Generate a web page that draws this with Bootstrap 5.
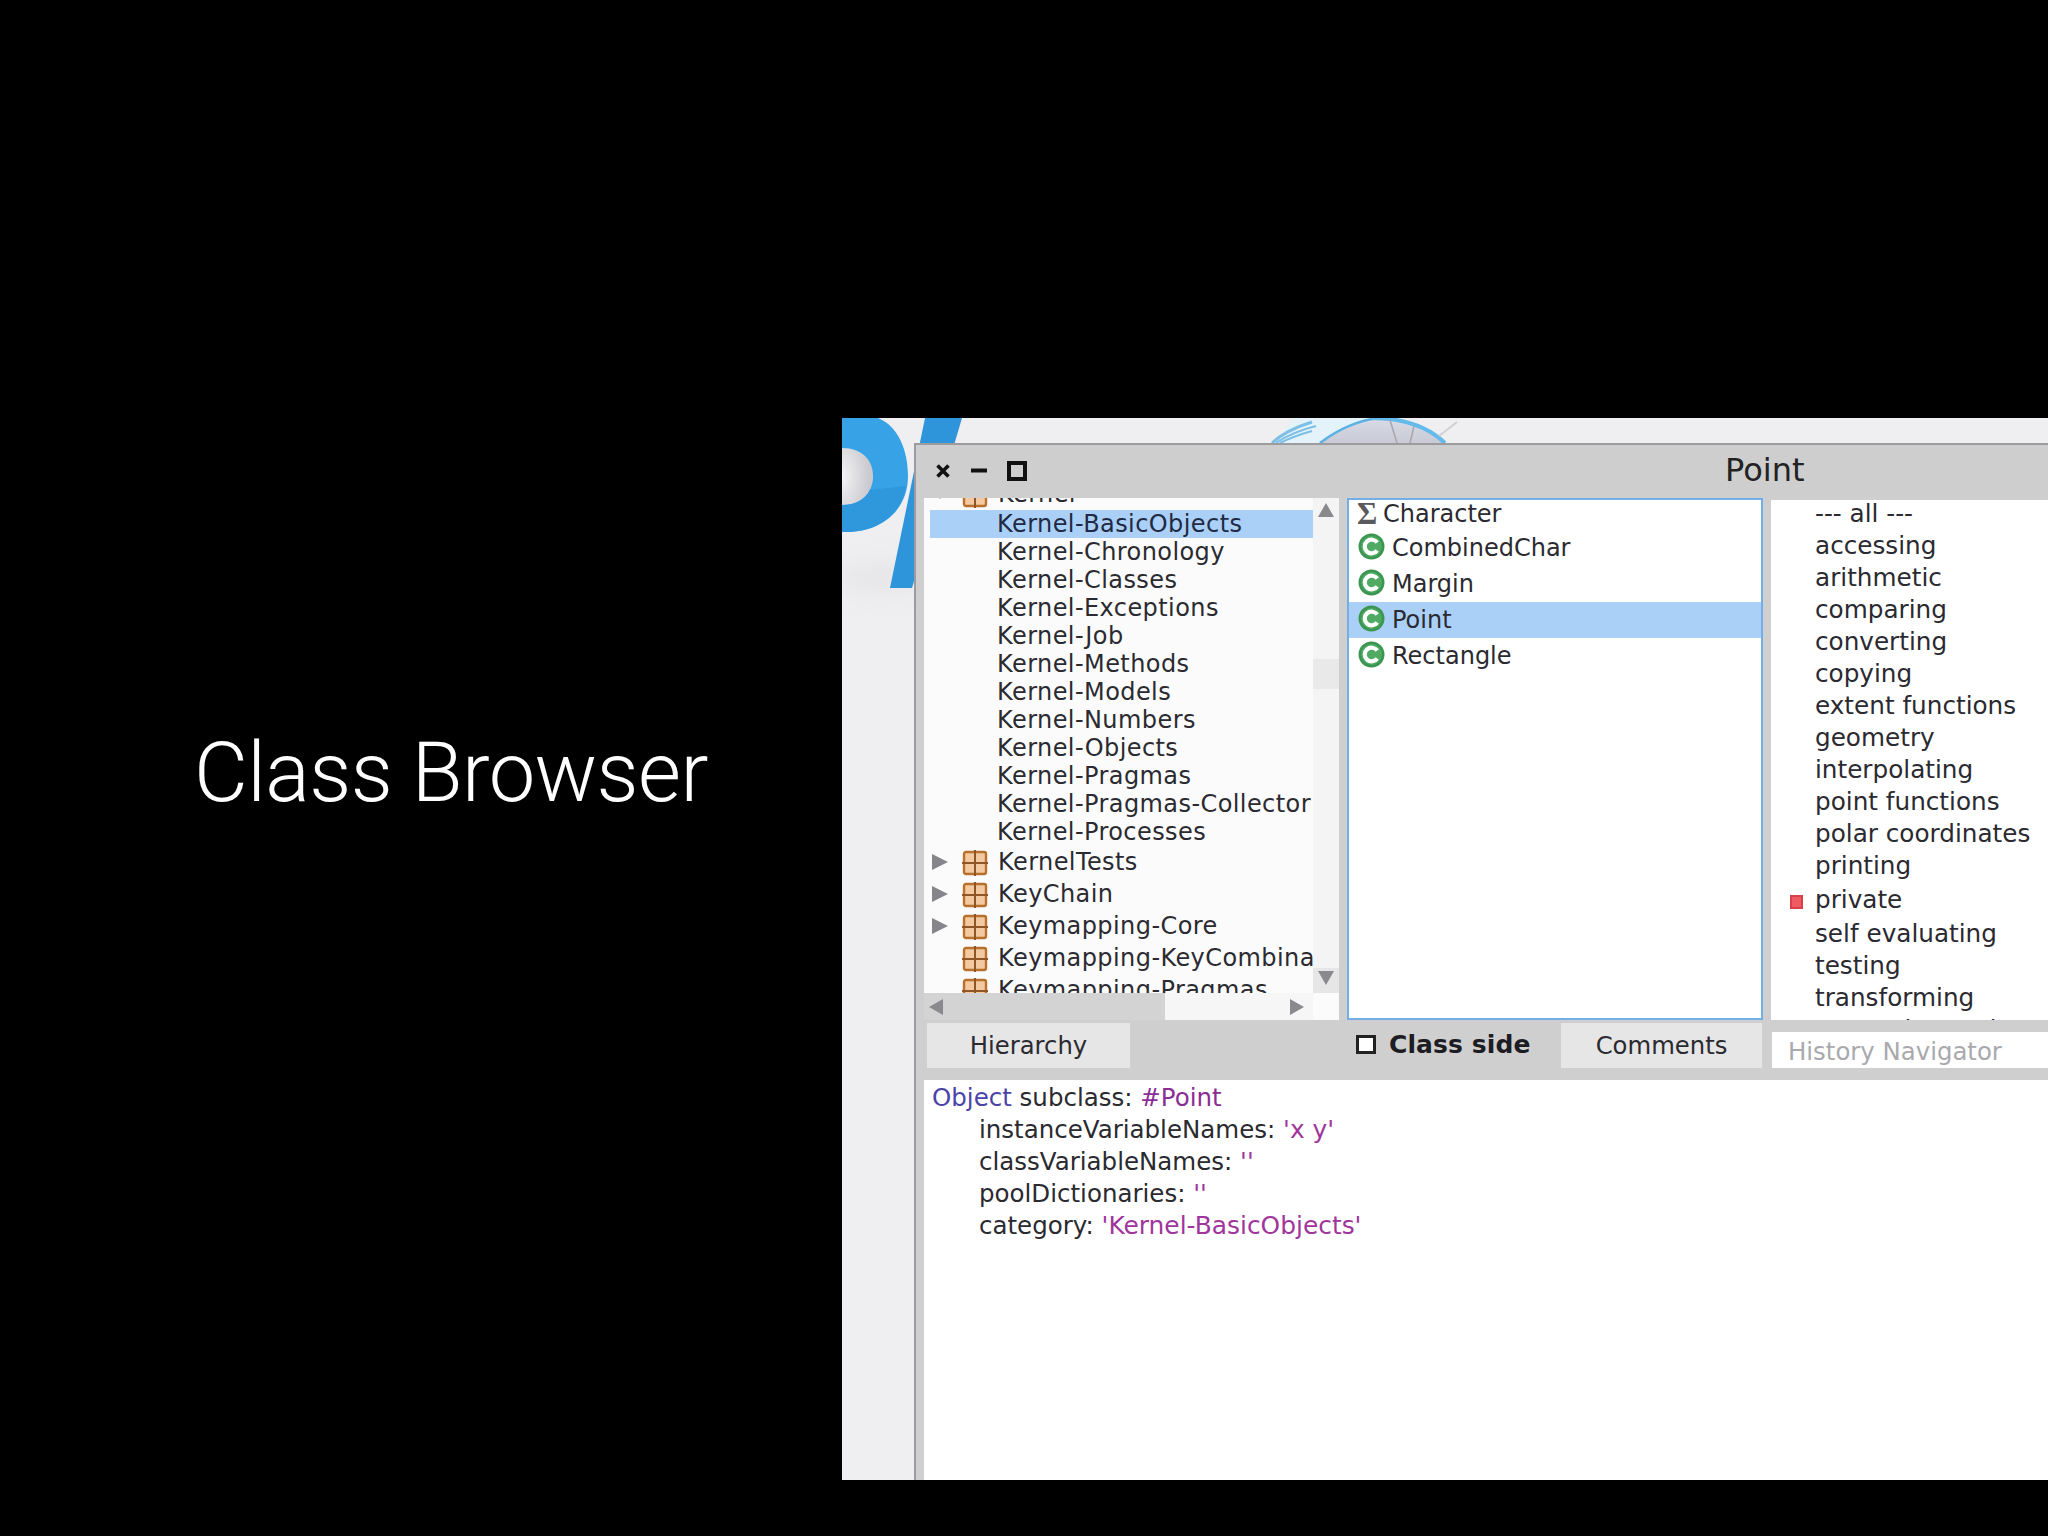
<!DOCTYPE html>
<html lang="en">
<head>
<meta charset="utf-8">
<title>Class Browser</title>
<link href="https://cdn.jsdelivr.net/npm/bootstrap@5.3.0/dist/css/bootstrap.min.css" rel="stylesheet">
<style>
html,body{margin:0;height:1536px;width:2048px;overflow:hidden;background:#000}
.stage{width:2048px;height:1536px;background:#000}
.slide-side{width:842px;height:1536px;flex:none;padding-left:194px;padding-top:718px}
.slide-heading{font:300 83px/110px Roboto,"Liberation Sans",sans-serif;color:#fff;margin:0;white-space:nowrap;letter-spacing:-.6px}
.shot{width:1206px;height:1062px;margin-top:418px;flex:none;position:relative;overflow:hidden;background:#efeef0}
.shot-art{position:absolute;left:0;top:0;width:1206px;height:300px}
.pwin{position:relative;margin:25px 0 0 72px;width:1134px;height:1037px;background:#cfcfd0;border-left:2px solid #9c9c9e;border-top:2px solid #9c9c9e;font-family:"DejaVu Sans",sans-serif;color:#2a2a30}
.titlebar{height:53px;flex:none;background:#cecece;padding-bottom:2px}
.win-ctl{padding-left:19px;gap:20px;width:809px;flex:none}
.win-title{font-size:32px;line-height:51px;color:#222}
.panes{height:522px;flex:none;padding-left:8px;gap:8px}
.tree-pane{width:415px;flex:none;background:#fafafa;display:grid;grid-template-columns:389px 26px;grid-template-rows:495px 27px}
.tree-view{overflow:hidden;padding-left:6px;background:#fbfbfb}
.tree-list{margin:-20px 0 0;padding:0;list-style:none}
.tree-row{height:28px;padding-left:67px;font-size:24px;line-height:28px;white-space:nowrap;overflow:hidden;letter-spacing:.42px}
.tree-row.pkg{height:32px;line-height:32px;padding-left:0}
.tree-row.on{background:#abd0f7;color:#1f2a44}
.tw{display:inline-block;width:18px;margin-left:1px;margin-right:13px;vertical-align:-1px}
.pk{margin-right:10px;vertical-align:-6px}
.vbar{background:#f4f4f5;flex-direction:column;padding-top:4px}
.vthumb{height:30px;background:#e9e9ea;margin-top:141px}
.vdown{margin-top:auto;background:#e6e6e7;height:25px;padding-bottom:5px}
.hbar{background:#f6f6f6}
.hthumb{width:241px;background:#d3d3d4}
.hend{flex:1;padding-right:8px}
.corner{background:#fbfbfb}
.class-pane{width:416px;flex:none;background:#fff;border:2px solid #74aee6;margin:0}
.class-list{margin:0;padding:0;list-style:none}
.class-row{height:36px;padding-left:9px;font-size:24px;line-height:36px;white-space:nowrap}
.class-row.first{height:30px;line-height:28px;padding-left:8px}
.class-row.on{background:#abd0f7}
.sig{display:inline-block;width:26px;font-size:31px;font-weight:700;color:#5a5a5e;font-family:"Liberation Serif",serif;line-height:28px;vertical-align:-2px}
.cic{vertical-align:-4px;margin-right:7px;margin-top:-8px}
.proto-pane{flex:1;background:#fff;margin-top:2px;overflow:hidden}
.proto-list{margin:0;padding:0;list-style:none}
.proto-row{height:32px;padding-left:44px;font-size:24.7px;line-height:28px;white-space:nowrap;position:relative}
.proto-row.tall{height:34px;line-height:32px}
.prv{position:absolute;left:19px;top:11px;width:13px;height:14px;background:#ef5a62;border:2px solid #d8404a}
.lower{height:60px;flex:none;padding-left:11px}
.pbtn{--bs-btn-border-radius:0;--bs-btn-bg:#e6e6e7;--bs-btn-border-color:#e6e6e7;--bs-btn-padding-y:0;--bs-btn-padding-x:0;--bs-btn-font-size:24.3px;--bs-btn-line-height:38px;--bs-btn-color:#2a2a30;height:45px;margin-top:3px;font-family:"DejaVu Sans",sans-serif}
.b-hier{width:203px}
.b-comm{width:201px}
.side-box{margin-left:226px;width:205px;flex:none;height:49px}
.cbx{width:20px;height:19px;border:3px solid #222;background:#fff;flex:none}
.side-lbl{font-size:25px;font-weight:700;color:#1c1c22;margin-left:13px;letter-spacing:.1px}
.hist{--bs-border-radius:0;border:0;border-radius:0;background:#fff;width:280px;margin-left:10px;height:36px;margin-top:12px;padding:2px 0 0 16px;font:24.4px "DejaVu Sans",sans-serif;flex:none}
.hist::placeholder{color:#a9a9ad;opacity:1}
.code-pane{flex:1;margin-left:8px;background:#fff;padding:2px 0 0 8px;font-size:24.5px;line-height:32px;min-height:0}
.code-line{white-space:nowrap;height:32px}
.ind{padding-left:47px}
.k-cls{color:#4a43a8}
.k-sym{color:#8a2e96}
.k-str{color:#a0359c;font-size:24.9px}
</style>
</head>
<body>
<div class="stage d-flex">
  <div class="slide-side"><h1 class="slide-heading">Class Browser</h1></div>
  <div class="shot">
    <svg class="shot-art" viewBox="0 0 1206 300" aria-hidden="true">
      <defs>
        <filter id="sft" x="-50%" y="-200%" width="200%" height="500%"><feGaussianBlur stdDeviation="14"/></filter>
        <linearGradient id="dome" x1="0" y1="0" x2="0" y2="1"><stop offset="0" stop-color="#d9dbe6"/><stop offset="1" stop-color="#c9cad6"/></linearGradient>
        <radialGradient id="hole" cx="0" cy=".5" r=".9"><stop offset="0" stop-color="#f4f4f6"/><stop offset="1" stop-color="#c9c9ce"/></radialGradient>
      </defs>
      <ellipse cx="40" cy="160" rx="50" ry="10" fill="#d8d8dc" opacity=".6" filter="url(#sft)"/>
      <path d="M83 0H120L70 170H48Z" fill="#2f95db"/>
      <path d="M0 30C20 30 31 42 31 58C31 74 20 87 0 87Z" fill="url(#hole)"/>
      <path fill-rule="evenodd" d="M0 0H36C56 8 66 32 66 58C66 92 40 114 4 114H0V87C20 87 31 74 31 58C31 42 20 30 0 30Z" fill="#37a2e6"/>
      <path d="M64 68C60 94 38 114 4 114H0V87C14 87 24 81 28 72Z" fill="#2f97dc"/>
      <path d="M432 25L452 0H530L478 25Z" fill="#e4f3f9"/>
      <path d="M430 25Q444 12 470 4" stroke="#7dbfe6" stroke-width="3" fill="none"/>
      <path d="M434 25Q450 14 474 8" stroke="#7dbfe6" stroke-width="2" fill="none"/>
      <path d="M438 25Q452 18 470 13" stroke="#7dbfe6" stroke-width="2" fill="none"/>
      <path d="M478 25C500 8 525 0 540 0C565 0 585 10 603 25Z" fill="url(#dome)"/>
      <path d="M478 25C500 8 525 0 540 0" stroke="#5ab1e4" stroke-width="2.5" fill="none"/>
      <path d="M530 0C560 0 585 8 603 25" stroke="#62bbea" stroke-width="4" fill="none"/>
      <path d="M548 2L555 25M572 8L568 25" stroke="#a8a8b0" stroke-width="1.6" fill="none"/>
      <path d="M597 18L615 4" stroke="#d0d0d4" stroke-width="2" fill="none"/>
    </svg>
    <div class="pwin d-flex flex-column">
      <div class="titlebar d-flex align-items-center">
        <div class="win-ctl d-flex align-items-center">
          <svg width="16" height="16" viewBox="0 0 16 16"><path d="M2.5 2.5L13.5 13.5M13.5 2.5L2.5 13.5" stroke="#111" stroke-width="3.6" fill="none"/></svg>
          <svg width="16" height="5" viewBox="0 0 16 5"><rect width="16" height="4" y=".5" fill="#111"/></svg>
          <svg width="20" height="20" viewBox="0 0 20 20"><rect x="2" y="2" width="16" height="16" stroke="#111" stroke-width="4" fill="none"/></svg>
        </div>
        <div class="win-title">Point</div>
      </div>
      <div class="panes d-flex">
        <div class="tree-pane">
          <div class="tree-view">
            <ul class="tree-list">
              <li class="tree-row pkg"><svg class="tw" viewBox="0 0 18 18" height="18"><path d="M1 4H17L9 14Z" fill="#85858a"/></svg><svg class="pk" width="26" height="26" viewBox="0 0 26 26"><rect x="2" y="2" width="22" height="22" rx="2" fill="#f2c9a0" stroke="#b9702c" stroke-width="2.4"/><path d="M13 0V26M0 13H26" stroke="#8f5526" stroke-width="2"/></svg>Kernel</li>
              <li class="tree-row on">Kernel-BasicObjects</li>
              <li class="tree-row">Kernel-Chronology</li>
              <li class="tree-row">Kernel-Classes</li>
              <li class="tree-row">Kernel-Exceptions</li>
              <li class="tree-row">Kernel-Job</li>
              <li class="tree-row">Kernel-Methods</li>
              <li class="tree-row">Kernel-Models</li>
              <li class="tree-row">Kernel-Numbers</li>
              <li class="tree-row">Kernel-Objects</li>
              <li class="tree-row">Kernel-Pragmas</li>
              <li class="tree-row">Kernel-Pragmas-Collector</li>
              <li class="tree-row">Kernel-Processes</li>
              <li class="tree-row pkg"><svg class="tw" viewBox="0 0 18 18" height="18"><path d="M1 1L17 9L1 17Z" fill="#85858a"/></svg><svg class="pk" width="26" height="26" viewBox="0 0 26 26"><rect x="2" y="2" width="22" height="22" rx="2" fill="#f2c9a0" stroke="#b9702c" stroke-width="2.4"/><path d="M13 0V26M0 13H26" stroke="#8f5526" stroke-width="2"/></svg>KernelTests</li>
              <li class="tree-row pkg"><svg class="tw" viewBox="0 0 18 18" height="18"><path d="M1 1L17 9L1 17Z" fill="#85858a"/></svg><svg class="pk" width="26" height="26" viewBox="0 0 26 26"><rect x="2" y="2" width="22" height="22" rx="2" fill="#f2c9a0" stroke="#b9702c" stroke-width="2.4"/><path d="M13 0V26M0 13H26" stroke="#8f5526" stroke-width="2"/></svg>KeyChain</li>
              <li class="tree-row pkg"><svg class="tw" viewBox="0 0 18 18" height="18"><path d="M1 1L17 9L1 17Z" fill="#85858a"/></svg><svg class="pk" width="26" height="26" viewBox="0 0 26 26"><rect x="2" y="2" width="22" height="22" rx="2" fill="#f2c9a0" stroke="#b9702c" stroke-width="2.4"/><path d="M13 0V26M0 13H26" stroke="#8f5526" stroke-width="2"/></svg>Keymapping-Core</li>
              <li class="tree-row pkg"><span class="tw"></span><svg class="pk" width="26" height="26" viewBox="0 0 26 26"><rect x="2" y="2" width="22" height="22" rx="2" fill="#f2c9a0" stroke="#b9702c" stroke-width="2.4"/><path d="M13 0V26M0 13H26" stroke="#8f5526" stroke-width="2"/></svg>Keymapping-KeyCombinations</li>
              <li class="tree-row pkg"><span class="tw"></span><svg class="pk" width="26" height="26" viewBox="0 0 26 26"><rect x="2" y="2" width="22" height="22" rx="2" fill="#f2c9a0" stroke="#b9702c" stroke-width="2.4"/><path d="M13 0V26M0 13H26" stroke="#8f5526" stroke-width="2"/></svg>Keymapping-Pragmas</li>
            </ul>
          </div>
          <div class="vbar d-flex align-items-center">
            <svg width="18" height="16" viewBox="0 0 18 16"><path d="M9 1L17 15H1Z" fill="#8a8a8e"/></svg>
            <div class="vthumb w-100"></div>
            <div class="vdown w-100 d-flex justify-content-center align-items-center"><svg width="18" height="16" viewBox="0 0 18 16"><path d="M1 1H17L9 15Z" fill="#8a8a8e"/></svg></div>
          </div>
          <div class="hbar d-flex">
            <div class="hthumb d-flex align-items-center ps-1"><svg width="16" height="18" viewBox="0 0 16 18"><path d="M15 1V17L1 9Z" fill="#8a8a8e"/></svg></div>
            <div class="hend d-flex align-items-center justify-content-end"><svg width="16" height="18" viewBox="0 0 16 18"><path d="M1 1V17L15 9Z" fill="#8a8a8e"/></svg></div>
          </div>
          <div class="corner"></div>
        </div>
        <div class="class-pane">
          <ul class="class-list">
            <li class="class-row first"><span class="sig">Σ</span>Character</li>
            <li class="class-row"><svg class="cic" width="27" height="27" viewBox="0 0 26 26"><circle cx="13" cy="13" r="12.5" fill="#3a9650"/><circle cx="13" cy="13" r="10" fill="#50aa64"/><path d="M18.5 9.2A6.6 6.6 0 1 0 18.5 16.8" stroke="#fff" stroke-width="4" fill="none"/></svg>CombinedChar</li>
            <li class="class-row"><svg class="cic" width="27" height="27" viewBox="0 0 26 26"><circle cx="13" cy="13" r="12.5" fill="#3a9650"/><circle cx="13" cy="13" r="10" fill="#50aa64"/><path d="M18.5 9.2A6.6 6.6 0 1 0 18.5 16.8" stroke="#fff" stroke-width="4" fill="none"/></svg>Margin</li>
            <li class="class-row on"><svg class="cic" width="27" height="27" viewBox="0 0 26 26"><circle cx="13" cy="13" r="12.5" fill="#3a9650"/><circle cx="13" cy="13" r="10" fill="#50aa64"/><path d="M18.5 9.2A6.6 6.6 0 1 0 18.5 16.8" stroke="#fff" stroke-width="4" fill="none"/></svg>Point</li>
            <li class="class-row"><svg class="cic" width="27" height="27" viewBox="0 0 26 26"><circle cx="13" cy="13" r="12.5" fill="#3a9650"/><circle cx="13" cy="13" r="10" fill="#50aa64"/><path d="M18.5 9.2A6.6 6.6 0 1 0 18.5 16.8" stroke="#fff" stroke-width="4" fill="none"/></svg>Rectangle</li>
          </ul>
        </div>
        <div class="proto-pane">
          <ul class="proto-list">
            <li class="proto-row">--- all ---</li>
            <li class="proto-row">accessing</li>
            <li class="proto-row">arithmetic</li>
            <li class="proto-row">comparing</li>
            <li class="proto-row">converting</li>
            <li class="proto-row">copying</li>
            <li class="proto-row">extent functions</li>
            <li class="proto-row">geometry</li>
            <li class="proto-row">interpolating</li>
            <li class="proto-row">point functions</li>
            <li class="proto-row">polar coordinates</li>
            <li class="proto-row">printing</li>
            <li class="proto-row tall"><span class="prv"></span>private</li>
            <li class="proto-row tall">self evaluating</li>
            <li class="proto-row">testing</li>
            <li class="proto-row">transforming</li>
            <li class="proto-row">truncation and round off</li>
          </ul>
        </div>
      </div>
      <div class="lower d-flex">
        <button type="button" class="btn pbtn b-hier flex-shrink-0">Hierarchy</button>
        <div class="side-box d-flex align-items-center"><span class="cbx"></span><span class="side-lbl">Class side</span></div>
        <button type="button" class="btn pbtn b-comm flex-shrink-0">Comments</button>
        <input class="form-control hist" placeholder="History Navigator">
      </div>
      <div class="code-pane">
        <div class="code-line"><span class="k-cls">Object</span> subclass: <span class="k-sym">#Point</span></div>
        <div class="code-line ind">instanceVariableNames: <span class="k-str">'x y'</span></div>
        <div class="code-line ind">classVariableNames: <span class="k-str">''</span></div>
        <div class="code-line ind">poolDictionaries: <span class="k-str">''</span></div>
        <div class="code-line ind">category: <span class="k-str">'Kernel-BasicObjects'</span></div>
      </div>
    </div>
  </div>
</div>
<script src="https://cdn.jsdelivr.net/npm/bootstrap@5.3.0/dist/js/bootstrap.bundle.min.js"></script>
</body>
</html>
